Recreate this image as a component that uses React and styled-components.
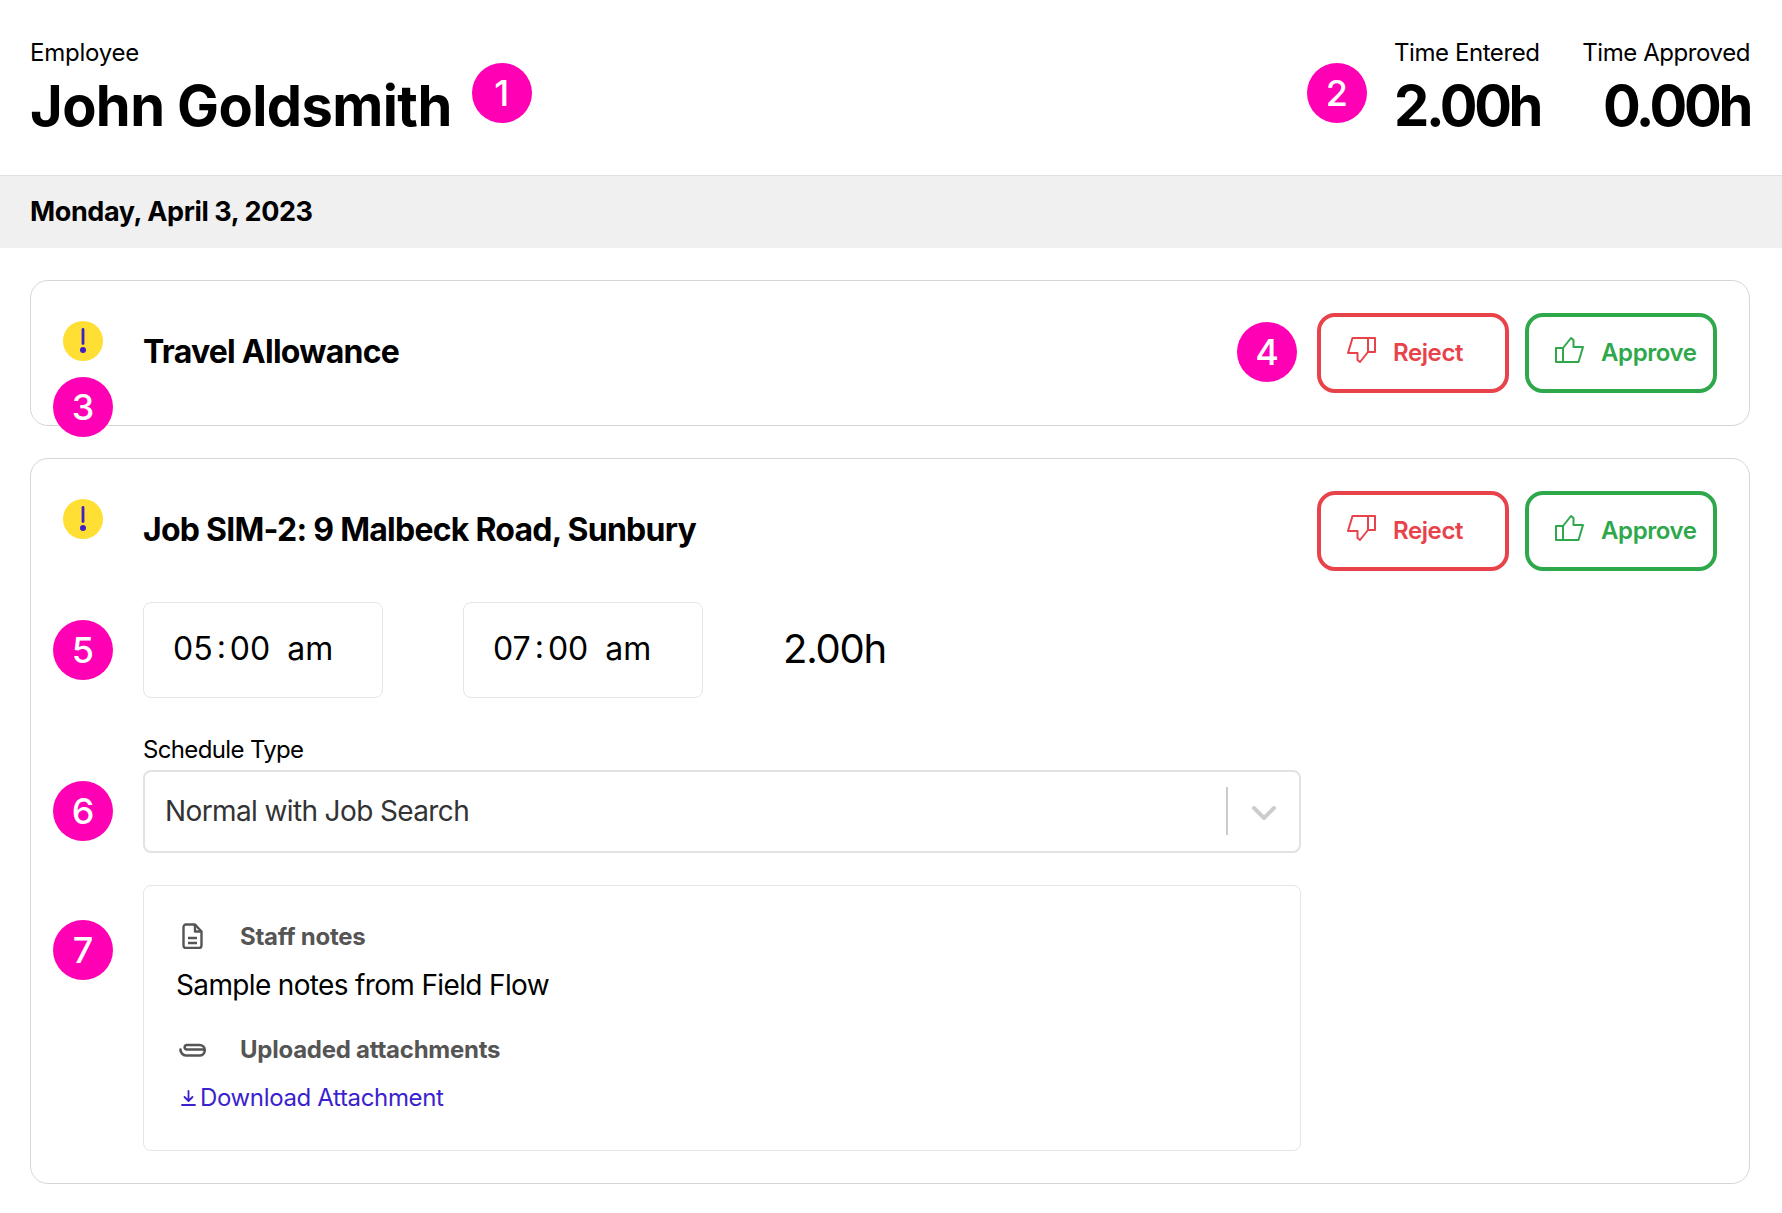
import styled, { createGlobalStyle } from "styled-components";

const GlobalStyle = createGlobalStyle`
  * { box-sizing: border-box; }
  html, body { margin: 0; padding: 0; background: #fff; }
  body { font-family: Inter, "Liberation Sans", sans-serif; color: #000; }
`;

const Header = styled.header`
  height: 175px;
  padding: 38px 32px 0 30px;
  display: flex;
  justify-content: space-between;
  align-items: flex-start;
`;
const Group = styled.div`
  display: flex;
  align-items: flex-start;
  gap: ${(p) => p.$gap}px;
`;
const Stat = styled.div`
  display: flex;
  flex-direction: column;
  align-items: ${(p) => (p.$end ? "flex-end" : "flex-start")};
`;
const Small = styled.div`
  font-size: 24px;
  line-height: 30px;
  letter-spacing: ${(p) => (p.$tight ? "-0.42px" : "-0.25px")};
`;
const Big = styled.div`
  font-size: 56px;
  line-height: 68px;
  font-weight: 700;
  letter-spacing: ${(p) => (p.$tight ? "-3.3px" : "-0.6px")};
  margin-top: 4px;
`;
const Badge = styled.div`
  width: 60px;
  height: 60px;
  flex: none;
  border-radius: 50%;
  background: #ff00b4;
  color: #fff;
  font-size: 36px;
  font-weight: 500;
  display: flex;
  align-items: center;
  justify-content: center;
  margin-top: ${(p) => p.$top || 0}px;
  margin-bottom: ${(p) => p.$bottom || 0}px;
`;
const FloatBadge = styled(Badge)`
  position: absolute;
  left: 22px;
  top: 96px;
`;
const Band = styled.div`
  height: 73px;
  padding: 0 0 2px 30px;
  display: flex;
  align-items: center;
  background: #f0f0f0;
  border-top: 1px solid #e0e0e0;
  font-size: 27px;
  font-weight: 700;
  letter-spacing: -0.4px;
`;
const Main = styled.main`
  padding: 32px 32px 30px 30px;
  display: flex;
  flex-direction: column;
  gap: 32px;
`;
const Card = styled.section`
  position: relative;
  padding: 32px 32px 32px 22px;
  border: 1px solid #d6d6d6;
  border-radius: 18px;
  display: flex;
  flex-direction: column;
`;
const Row = styled.div`
  display: grid;
  grid-template-columns: 60px 1fr;
  column-gap: 30px;
  align-items: ${(p) => p.$align || "center"};
  margin-top: ${(p) => p.$top || 0}px;
`;
const Warn = styled.div`
  width: 40px;
  height: 40px;
  margin: -24px 0 0 10px;
  border-radius: 50%;
  background: #ffdf33;
  color: #3f1fc6;
  display: flex;
  align-items: center;
  justify-content: center;
`;
const TitleRow = styled.div`
  display: flex;
  align-items: center;
  justify-content: space-between;
`;
const Title = styled.h2`
  margin: -3px 0 0;
  font-size: 32px;
  line-height: 40px;
  font-weight: 700;
  letter-spacing: -0.75px;
`;
const Actions = styled.div`
  display: flex;
  align-items: center;
  gap: 16px;
`;
const ActionBtn = styled.button`
  width: 192px;
  height: 80px;
  padding: 0 0 2px 26px;
  display: flex;
  align-items: center;
  gap: 17px;
  background: #fff;
  border: 4px solid ${(p) => p.$color};
  border-radius: 18px;
  color: ${(p) => p.$color};
  font-family: inherit;
  font-size: 24px;
  font-weight: 600;
  letter-spacing: -0.4px;
`;
const Thumb = styled.svg`
  width: 29px;
  height: 26px;
  margin-top: -4px;
  transform: ${(p) => (p.$down ? "rotate(180deg)" : "none")};
`;
const TimeRow = styled.div`
  display: flex;
  align-items: center;
  gap: 80px;
`;
const TimeBox = styled.div`
  width: 240px;
  height: 96px;
  padding: 0 0 4px 29px;
  display: flex;
  align-items: center;
  border: 1px solid #e6e6e6;
  border-radius: 8px;
  font-size: 32px;
  word-spacing: 8px;
`;
const Colon = styled.span`
  margin: 0 4px;
  position: relative;
  top: -2px;
`;
const Total = styled.div`
  font-size: 40px;
  letter-spacing: -1.2px;
  margin-top: -4px;
`;
const Label = styled.div`
  font-size: 24px;
  line-height: 30px;
  letter-spacing: -0.65px;
  margin-bottom: 5px;
`;
const Select = styled.div`
  width: 1158px;
  height: 83px;
  padding: 0 22px 2px 20px;
  display: flex;
  align-items: center;
  border: 2px solid #e2e2e2;
  border-radius: 8px;
  color: #333;
  font-size: 28px;
  letter-spacing: -0.62px;
`;
const SelectText = styled.span`
  flex: 1;
`;
const Divider = styled.span`
  width: 2px;
  height: 48px;
  background: #ccc;
  margin-right: 23px;
`;
const Chevron = styled.svg`
  margin-top: 4px;
`;
const Notes = styled.div`
  width: 1158px;
  height: 266px;
  padding: 30px 32px 0;
  border: 1px solid #e6e6e6;
  border-radius: 8px;
  display: flex;
  flex-direction: column;
`;
const NoteHead = styled.div`
  height: 40px;
  display: flex;
  align-items: center;
  color: #555;
  font-size: 24px;
  font-weight: 700;
  letter-spacing: -0.25px;
  margin-top: ${(p) => p.$top || 0}px;
`;
const IconSlot = styled.span`
  width: 64px;
  padding-left: ${(p) => p.$pad}px;
  display: flex;
  align-items: center;
`;
const NoteText = styled.div`
  font-size: 28px;
  line-height: 40px;
  margin-top: 9px;
  letter-spacing: -0.65px;
`;
const DownloadLink = styled.a`
  margin-top: 9px;
  padding-left: 5px;
  display: flex;
  align-items: center;
  gap: 4px;
  color: #3a22cf;
  font-size: 24px;
  line-height: 40px;
  letter-spacing: -0.35px;
`;

const ThumbIcon = ({ down }) => (
  <Thumb $down={down} viewBox="0 0 29 26" fill="none" stroke="currentColor" strokeWidth="2" strokeLinejoin="round">
    <path d="M1 11h7v14H1z" />
    <path d="M8 11l8-10 2.500 2v7h9.500l-4.500 15H8" />
  </Thumb>
);

const Buttons = () => (
  <Actions>
    <ActionBtn $color="#e8424a">
      <ThumbIcon down />
      Reject
    </ActionBtn>
    <ActionBtn $color="#2ea84a">
      <ThumbIcon />
      Approve
    </ActionBtn>
  </Actions>
);

const WarnIcon = () => (
  <Warn>
    <svg width="6" height="26" viewBox="0 0 6 26" fill="currentColor">
      <rect x="1.600" y="0" width="2.800" height="17" rx="1.400" />
      <circle cx="3" cy="22" r="3" />
    </svg>
  </Warn>
);

const App = () => {
  return (
    <>
      <GlobalStyle />
      <Header>
        <Group $gap={20}>
          <div>
            <Small>Employee</Small>
            <Big>John Goldsmith</Big>
          </div>
          <Badge $top={25}>1</Badge>
        </Group>
        <Group $gap={27}>
          <Badge $top={25}>2</Badge>
          <Group $gap={42}>
            <Stat>
              <Small $tight>Time Entered</Small>
              <Big $tight>2.00h</Big>
            </Stat>
            <Stat $end>
              <Small $tight>Time Approved</Small>
              <Big $tight>0.00h</Big>
            </Stat>
          </Group>
        </Group>
      </Header>
      <Band>Monday, April 3, 2023</Band>
      <Main>
        <Card>
          <Row>
            <WarnIcon />
            <TitleRow>
              <Title>Travel Allowance</Title>
              <Group $gap={20}>
                <Badge $top={9}>4</Badge>
                <Buttons />
              </Group>
            </TitleRow>
          </Row>
          <FloatBadge>3</FloatBadge>
        </Card>
        <Card>
          <Row>
            <WarnIcon />
            <TitleRow>
              <Title>Job SIM-2: 9 Malbeck Road, Sunbury</Title>
              <Buttons />
            </TitleRow>
          </Row>
          <Row $top={31}>
            <Badge>5</Badge>
            <TimeRow>
              <TimeBox>
                05<Colon>:</Colon>00 am
              </TimeBox>
              <TimeBox>
                07<Colon>:</Colon>00 am
              </TimeBox>
              <Total>2.00h</Total>
            </TimeRow>
          </Row>
          <Row $top={37} $align="end">
            <Badge $bottom={12}>6</Badge>
            <div>
              <Label>Schedule Type</Label>
              <Select>
                <SelectText>Normal with Job Search</SelectText>
                <Divider />
                <Chevron width="26" height="16" viewBox="0 0 26 16" fill="none" stroke="#ccc" strokeWidth="4" strokeLinecap="round" strokeLinejoin="round">
                  <path d="M3 3l10 10L23 3" />
                </Chevron>
              </Select>
            </div>
          </Row>
          <Row $top={32} $align="start">
            <Badge $top={35}>7</Badge>
            <Notes>
              <NoteHead>
                <IconSlot $pad={6}>
                  <svg width="21" height="26" viewBox="0 0 21 26" fill="none" stroke="#555" strokeWidth="2.400" strokeLinejoin="round">
                    <path d="M4 1.500h9l6.500 7v14a2.500 2.500 0 0 1-2.500 2.500H4a2.500 2.500 0 0 1-2.500-2.500V4A2.500 2.500 0 0 1 4 1.500z" />
                    <path d="M13 1.500v7h6.500M6 15h9M6 20h9" />
                  </svg>
                </IconSlot>
                Staff notes
              </NoteHead>
              <NoteText>Sample notes from Field Flow</NoteText>
              <NoteHead $top={24}>
                <IconSlot $pad={3}>
                  <svg width="27" height="15" viewBox="0 0 27 15" fill="none" stroke="#555" strokeWidth="2.600" strokeLinecap="round">
                    <path d="M24 7.500H7.500a2.300 2.300 0 0 1 0-4.500H20.500a5 5 0 0 1 0 10.500H7a5.700 5.700 0 0 1-5.500-6" />
                  </svg>
                </IconSlot>
                Uploaded attachments
              </NoteHead>
              <DownloadLink>
                <svg width="15" height="16" viewBox="0 0 15 16" fill="none" stroke="currentColor" strokeWidth="1.800" strokeLinecap="round" strokeLinejoin="round">
                  <path d="M7.500 1v9.500M3.500 7l4 4 4-4M1 15h13" />
                </svg>
                Download Attachment
              </DownloadLink>
            </Notes>
          </Row>
        </Card>
      </Main>
    </>
  );
};

export default App;
